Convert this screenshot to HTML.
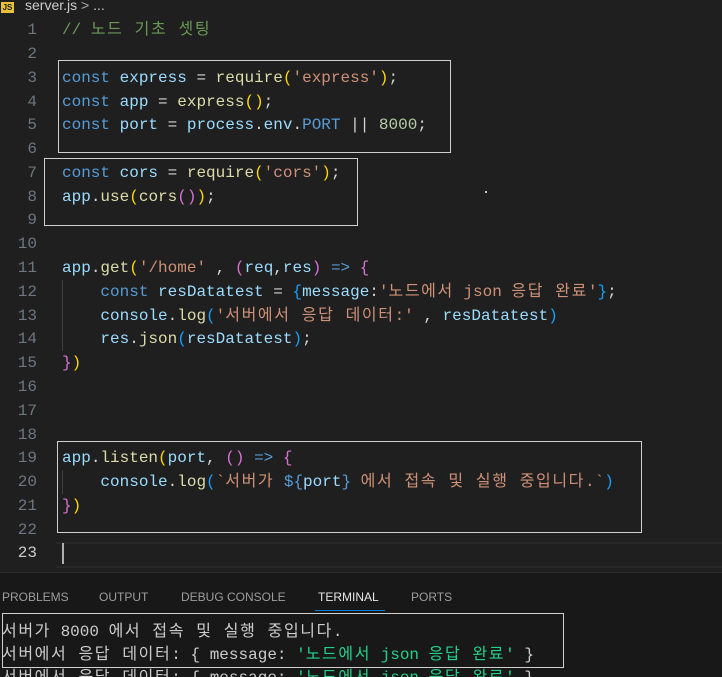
<!DOCTYPE html>
<html style="overflow:hidden;height:677px"><head><meta charset="utf-8"><style>
body{margin:0;width:722px;height:677px;background:#1f1f1f;overflow:hidden;position:relative;font-family:"Liberation Mono","Noto Sans CJK KR",monospace;}
.ln{position:absolute;left:0;width:37px;text-align:right;color:#6e7681;font-size:16px;line-height:24px;font-family:"Liberation Mono",monospace}
.c{position:absolute;left:62px;white-space:pre;font-size:16px;line-height:24px;color:#d4d4d4}
.k{color:#569cd6}.v{color:#9cdcfe}.f{color:#dcdcaa}.s{color:#ce9178}.cm{color:#6a9955}.n{color:#b5cea8}
.g{color:#ffd700}.p{color:#da70d6}.b{color:#179fff}
.h{letter-spacing:1.6px}
.box{position:absolute;border:1px solid #d0d0d0}
.guide{position:absolute;left:62px;width:1px;background:#404040}
.tab{position:absolute;top:590px;font-family:"Liberation Sans",sans-serif;font-size:12px;color:#9d9d9d}
.t{position:absolute;left:2px;white-space:pre;font-size:16px;line-height:23px;color:#cccccc}
</style></head><body>
<div style="position:absolute;left:1px;top:2px;width:13px;height:11px;background:#e8c13a;color:#1f1f1f;font:bold 8px 'Liberation Sans',sans-serif;line-height:12px;text-align:center">JS</div>
<div style="position:absolute;left:25px;top:-3px;font:14px 'Liberation Sans',sans-serif;color:#cccccc">server.js <span style="color:#aaa">&gt;</span> ...</div>

<div class="ln" style="top:18px">1</div>
<div class="ln" style="top:42px">2</div>
<div class="ln" style="top:66px">3</div>
<div class="ln" style="top:90px">4</div>
<div class="ln" style="top:113px">5</div>
<div class="ln" style="top:137px">6</div>
<div class="ln" style="top:161px">7</div>
<div class="ln" style="top:185px">8</div>
<div class="ln" style="top:208px">9</div>
<div class="ln" style="top:232px">10</div>
<div class="ln" style="top:256px">11</div>
<div class="ln" style="top:280px">12</div>
<div class="ln" style="top:304px">13</div>
<div class="ln" style="top:327px">14</div>
<div class="ln" style="top:351px">15</div>
<div class="ln" style="top:375px">16</div>
<div class="ln" style="top:399px">17</div>
<div class="ln" style="top:423px">18</div>
<div class="ln" style="top:446px">19</div>
<div class="ln" style="top:470px">20</div>
<div class="ln" style="top:494px">21</div>
<div class="ln" style="top:518px">22</div>
<div style="position:absolute;left:56px;top:542px;width:666px;height:22px;border-top:2px solid #282828;border-bottom:2px solid #282828"></div>
<div class="ln" style="top:541px;color:#cccccc">23</div>
<div style="position:absolute;left:62px;top:543px;width:2px;height:21px;background:#aeafad"></div>

<div class="guide" style="top:280px;height:71px"></div>
<div class="guide" style="top:470px;height:24px"></div>

<div class="c" style="top:18px"><span class="cm">// <span class="h">노드 기초 셋팅</span></span></div>
<div class="c" style="top:66px"><span class="k">const</span> <span class="v">express</span> = <span class="f">require</span><span class="g">(</span><span class="s">'express'</span><span class="g">)</span>;</div>
<div class="c" style="top:90px"><span class="k">const</span> <span class="v">app</span> = <span class="f">express</span><span class="g">()</span>;</div>
<div class="c" style="top:113px"><span class="k">const</span> <span class="v">port</span> = <span class="v">process</span>.<span class="v">env</span>.<span class="k">PORT</span> || <span class="n">8000</span>;</div>
<div class="c" style="top:161px"><span class="k">const</span> <span class="v">cors</span> = <span class="f">require</span><span class="g">(</span><span class="s">'cors'</span><span class="g">)</span>;</div>
<div class="c" style="top:185px"><span class="v">app</span>.<span class="f">use</span><span class="g">(</span><span class="f">cors</span><span class="p">()</span><span class="g">)</span>;</div>
<div class="c" style="top:256px"><span class="v">app</span>.<span class="f">get</span><span class="g">(</span><span class="s">'/home'</span> , <span class="p">(</span><span class="v">req</span>,<span class="v">res</span><span class="p">)</span> <span class="k">=&gt;</span> <span class="p">{</span></div>
<div class="c" style="top:280px">    <span class="k">const</span> <span class="v">resDatatest</span> = <span class="b">{</span><span class="v">message</span>:<span class="s">'<span class="h">노드에서</span> json <span class="h">응답 완료</span>'</span><span class="b">}</span>;</div>
<div class="c" style="top:304px">    <span class="v">console</span>.<span class="f">log</span><span class="b">(</span><span class="s">'<span class="h">서버에서 응답 데이터</span>:'</span> , <span class="v">resDatatest</span><span class="b">)</span></div>
<div class="c" style="top:327px">    <span class="v">res</span>.<span class="f">json</span><span class="b">(</span><span class="v">resDatatest</span><span class="b">)</span>;</div>
<div class="c" style="top:351px"><span class="p">}</span><span class="g">)</span></div>
<div class="c" style="top:446px"><span class="v">app</span>.<span class="f">listen</span><span class="g">(</span><span class="v">port</span>, <span class="p">()</span> <span class="k">=&gt;</span> <span class="p">{</span></div>
<div class="c" style="top:470px">    <span class="v">console</span>.<span class="f">log</span><span class="b">(</span><span class="s">`<span class="h">서버가</span> </span><span class="k">${</span><span class="v">port</span><span class="k">}</span><span class="s"> <span class="h">에서 접속 및 실행 중입니다</span>.`</span><span class="b">)</span></div>
<div class="c" style="top:494px"><span class="p">}</span><span class="g">)</span></div>

<div class="box" style="left:58px;top:60px;width:391px;height:91px"></div>
<div class="box" style="left:44px;top:158px;width:312px;height:66px"></div>
<div class="box" style="left:57px;top:441px;width:583px;height:90px"></div>
<div style="position:absolute;left:485px;top:191px;width:2px;height:2px;background:#ccc"></div>

<div style="position:absolute;left:0;top:572px;width:722px;height:105px;background:#181818;border-top:1px solid #2b2b2b;overflow:hidden">
<div class="tab" style="left:2px;top:17px">PROBLEMS</div>
<div class="tab" style="left:99px;top:17px">OUTPUT</div>
<div class="tab" style="left:181px;top:17px">DEBUG CONSOLE</div>
<div class="tab" style="left:318px;top:17px;color:#e7e7e7">TERMINAL</div>
<div class="tab" style="left:411px;top:17px">PORTS</div>
<div style="position:absolute;left:315px;top:37px;width:70px;height:1px;background:#0078d4"></div>
<div class="t" style="top:48px"><span class="h">서버가</span> 8000 <span class="h">에서 접속 및 실행 중입니다</span>.</div>
<div class="t" style="top:71px"><span class="h">서버에서 응답 데이터</span>: { message: <span style="color:#23d18b">'<span class="h">노드에서</span> json <span class="h">응답 완료</span>'</span> }</div>
<div class="t" style="top:94px"><span class="h">서버에서 응답 데이터</span>: { message: <span style="color:#23d18b">'<span class="h">노드에서</span> json <span class="h">응답 완료</span>'</span> }</div>
<div class="box" style="left:2px;top:40px;width:560px;height:53px"></div>
</div>
</body></html>
